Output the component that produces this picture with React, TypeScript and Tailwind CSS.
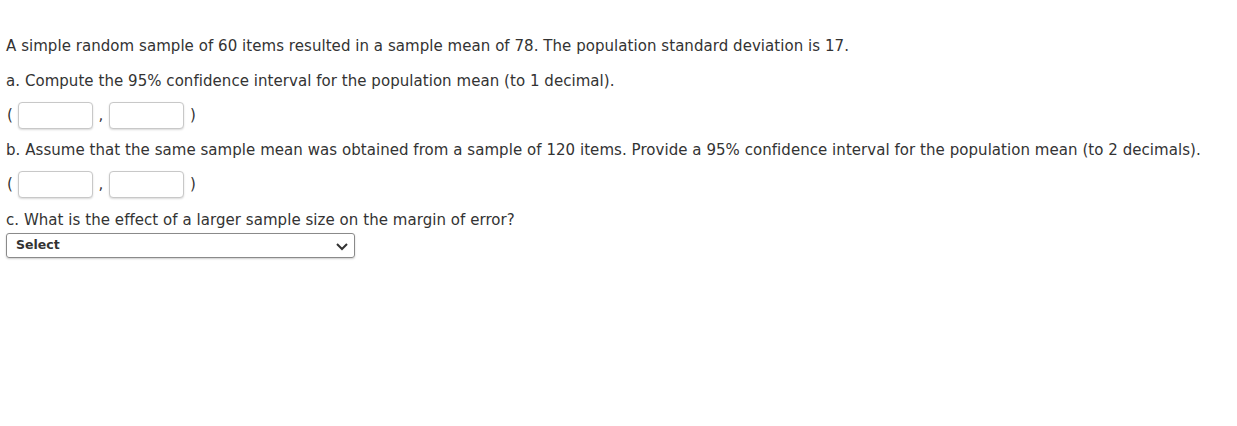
import React from "react";

function Box() {
  return (
    <div className="w-[75px] h-[27px] rounded-[4px] border border-[#c8c8c8] bg-white shadow-[0_1px_2px_rgba(0,0,0,0.15)]" />
  );
}

function IntervalRow() {
  return (
    <div className="flex items-center h-[27px]">
      <span className="w-[12px] pl-[1px]">(</span>
      <Box />
      <span className="w-[16px] text-center">,</span>
      <Box />
      <span className="pl-[6px]">)</span>
    </div>
  );
}

export default function App() {
  return (
    <div
      className="bg-white w-[1237px] h-[426px] text-[#333333] text-[15px] tracking-[0.05px] pl-[6px] pt-[37px]"
      style={{ fontFamily: '"DejaVu Sans", Verdana, sans-serif' }}
    >
      <p className="leading-[18px]">
        A simple random sample of 60 items resulted in a sample mean of 78. The population standard deviation is 17.
      </p>
      <p className="leading-[18px] mt-[17px]">
        a. Compute the 95% confidence interval for the population mean (to 1 decimal).
      </p>
      <div className="mt-[12px]">
        <IntervalRow />
      </div>
      <p className="leading-[18px] mt-[12px]">
        b. Assume that the same sample mean was obtained from a sample of 120 items. Provide a 95% confidence interval for the population mean (to 2 decimals).
      </p>
      <div className="mt-[12px]">
        <IntervalRow />
      </div>
      <p className="leading-[18px] mt-[13px]">
        c. What is the effect of a larger sample size on the margin of error?
      </p>
      <div className="mt-[4px] w-[349px] h-[25px] rounded-[3px] border border-[#8a8a8a] shadow-[0_1px_2px_rgba(0,0,0,0.2)] flex items-center justify-between pl-[9px] pr-[4px]">
        <span className="text-[12.5px] tracking-normal font-bold text-[#333333]">Select</span>
        <svg width="14" height="14" viewBox="0 0 14 14" className="mr-[1px]">
          <path d="M2 5 L7 10 L12 5" fill="none" stroke="#333" strokeWidth="2" />
        </svg>
      </div>
    </div>
  );
}
